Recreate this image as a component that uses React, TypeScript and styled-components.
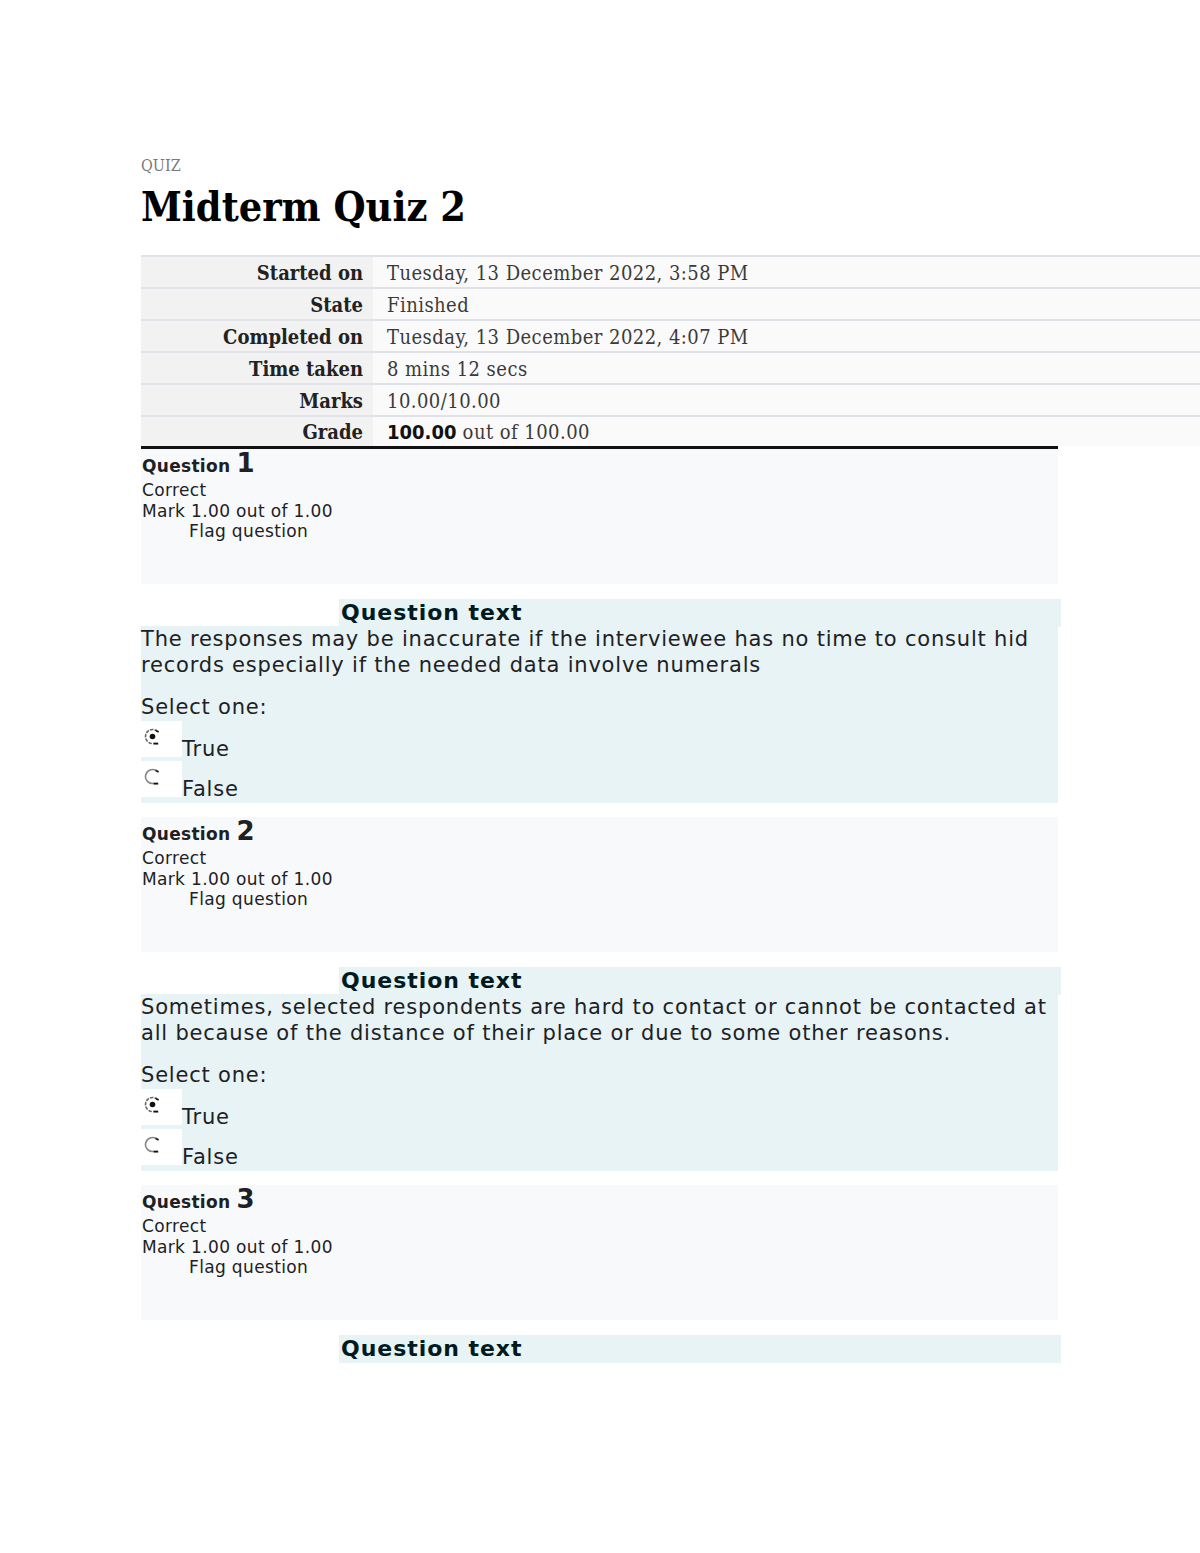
import React from "react";
import styled, { createGlobalStyle } from "styled-components";

const Global = createGlobalStyle`
  html, body { margin: 0; padding: 0; background: #ffffff; }
  body { overflow-x: hidden; }
`;

const Page = styled.div`
  padding: 155px 0 180px 141px;
  width: 1200px;
  box-sizing: border-box;
`;

const Kicker = styled.div`
  font-family: "DejaVu Serif Condensed", "DejaVu Serif", serif;
  font-size: 16px;
  line-height: 22px;
  color: #7a7a7a;
`;

const Title = styled.h1`
  margin: 5px 0 22px 0;
  height: 51px;
  font-family: "DejaVu Serif Condensed", "DejaVu Serif", serif;
  font-weight: bold;
  font-size: 41px;
  line-height: 51px;
  color: #000;
`;

const SummaryTable = styled.div`
  display: grid;
  grid-template-columns: 232px 1fr;
  width: 1059px;
  border-top: 2px solid #dfe2e6;
`;

const Label = styled.div<{ $last?: boolean }>`
  background: #f2f2f2;
  text-align: right;
  padding: 2px 10px 0 0;
  font-family: "DejaVu Serif Condensed", "DejaVu Serif", serif;
  font-weight: bold;
  font-size: 20px;
  line-height: ${(p) => (p.$last ? "27px" : "28px")};
  color: #222;
  border-bottom: ${(p) => (p.$last ? "none" : "2px solid #dfe2e6")};
`;

const Value = styled.div<{ $last?: boolean }>`
  background: #fafafa;
  padding: 2px 0 0 14px;
  font-family: "DejaVu Serif Condensed", "DejaVu Serif", serif;
  font-size: 20px;
  line-height: ${(p) => (p.$last ? "27px" : "28px")};
  letter-spacing: 0.45px;
  color: #3a3a3a;
  border-bottom: ${(p) => (p.$last ? "none" : "2px solid #dfe2e6")};
  b {
    font-family: "DejaVu Sans Condensed", "DejaVu Sans", sans-serif;
    font-weight: bold;
    letter-spacing: 0;
    color: #111;
  }
`;

const Rule = styled.div`
  width: 917px;
  height: 3px;
  background: #111;
`;

const InfoCard = styled.div<{ $first?: boolean }>`
  width: 917px;
  height: 135px;
  box-sizing: border-box;
  background: #f8f9fa;
  padding: 0 0 0 1px;
  margin-top: ${(p) => (p.$first ? "0" : "14px")};
  font-family: "DejaVu Sans", sans-serif;
  color: #1d2125;
`;

const QHead = styled.div`
  font-size: 17px;
  font-weight: bold;
  letter-spacing: 0.3px;
  line-height: 28px;
  span {
    font-size: 26px;
    font-weight: bold;
  }
`;

const InfoLine = styled.div<{ $indent?: boolean }>`
  font-size: 17px;
  letter-spacing: 0.35px;
  line-height: 20.5px;
  padding-left: ${(p) => (p.$indent ? "47px" : "0")};
`;

const QTextBlock = styled.div`
  margin-top: 15px;
  width: 917px;
  font-family: "DejaVu Sans", sans-serif;
`;

const QTextHeading = styled.div`
  margin-left: 198px;
  width: 722px;
  height: 28px;
  background: #e7f3f5;
  padding-left: 2px;
  font-weight: bold;
  font-size: 22px;
  line-height: 28px;
  letter-spacing: 0.95px;
  color: #001a1e;
  box-sizing: border-box;
`;

const QContent = styled.div`
  background: #e7f3f5;
  color: #1d2125;
  padding: 0 0 6px 0;
  margin-top: -1px;
`;

const Prompt = styled.div`
  font-size: 21px;
  line-height: 26px;
  letter-spacing: 0.8px;
`;

const SelectOne = styled.div`
  font-size: 21px;
  line-height: 26px;
  letter-spacing: 0.8px;
  margin-top: 16px;
  margin-bottom: -3px;
`;

const Option = styled.div`
  display: flex;
  align-items: flex-end;
  height: 36px;
  margin-top: 4px;
`;

const RadioBox = styled.div`
  width: 41px;
  height: 36px;
  background: #ffffff;
  box-sizing: border-box;
  padding: 6px 0 0 3px;
  align-self: flex-start;
`;

const OptionLabel = styled.div`
  font-size: 21px;
  line-height: 24px;
  letter-spacing: 0.8px;
  margin-bottom: -4px;
`;

const Radio = ({ checked }: { checked: boolean }) => (
  <svg width="20" height="20" viewBox="0 0 20 20">
    <path
      d="M13.45 4.55 A7 7 0 1 0 9.7 16.4"
      fill="none"
      stroke={checked ? "#666" : "#888"}
      strokeWidth="1.6"
      strokeDasharray={checked ? "3.4 1.2" : "none"}
    />
    <path d="M11.6 3.2 L14.6 5" stroke="#222" strokeWidth="1.7" />
    <path d="M9.6 16.6 L14.2 16.6" stroke="#111" strokeWidth="1.9" />
    {checked && <circle cx="8.5" cy="9.5" r="2.8" fill="#111" />}
  </svg>
);

type Q = { n: number; text?: string[] };

const questions: Q[] = [
  {
    n: 1,
    text: [
      "The responses may be inaccurate if the interviewee has no time to consult hid",
      "records especially if the needed data involve numerals",
    ],
  },
  {
    n: 2,
    text: [
      "Sometimes, selected respondents are hard to contact or cannot be contacted at",
      "all because of the distance of their place or due to some other reasons.",
    ],
  },
  { n: 3 },
];

const rows: [string, React.ReactNode][] = [
  ["Started on", "Tuesday, 13 December 2022, 3:58 PM"],
  ["State", "Finished"],
  ["Completed on", "Tuesday, 13 December 2022, 4:07 PM"],
  ["Time taken", "8 mins 12 secs"],
  ["Marks", "10.00/10.00"],
  [
    "Grade",
    <>
      <b>100.00</b> out of 100.00
    </>,
  ],
];

export default function App() {
  return (
    <>
      <Global />
      <Page>
        <Kicker>QUIZ</Kicker>
        <Title>Midterm Quiz 2</Title>
        <SummaryTable>
          {rows.map(([l, v], i) => (
            <React.Fragment key={l}>
              <Label $last={i === rows.length - 1}>{l}</Label>
              <Value $last={i === rows.length - 1}>{v}</Value>
            </React.Fragment>
          ))}
        </SummaryTable>
        <Rule />
        {questions.map((q, i) => (
          <React.Fragment key={q.n}>
            <InfoCard $first={i === 0}>
              <QHead>
                Question <span>{q.n}</span>
              </QHead>
              <InfoLine>Correct</InfoLine>
              <InfoLine>Mark 1.00 out of 1.00</InfoLine>
              <InfoLine $indent>Flag question</InfoLine>
            </InfoCard>
            <QTextBlock>
              <QTextHeading>Question text</QTextHeading>
              {q.text && (
                <QContent>
                  <Prompt>
                    {q.text.map((t) => (
                      <div key={t}>{t}</div>
                    ))}
                  </Prompt>
                  <SelectOne>Select one:</SelectOne>
                  <Option>
                    <RadioBox>
                      <Radio checked />
                    </RadioBox>
                    <OptionLabel>True</OptionLabel>
                  </Option>
                  <Option>
                    <RadioBox>
                      <Radio checked={false} />
                    </RadioBox>
                    <OptionLabel>False</OptionLabel>
                  </Option>
                </QContent>
              )}
            </QTextBlock>
          </React.Fragment>
        ))}
      </Page>
    </>
  );
}
